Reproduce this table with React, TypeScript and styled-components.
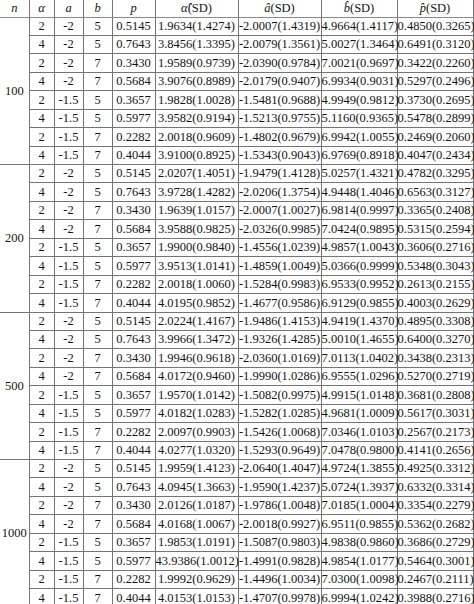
import styled, { createGlobalStyle } from 'styled-components'

const GlobalStyle = createGlobalStyle`
  html, body {
    margin: 0;
    padding: 0;
    background: #ffffff;
  }
  body {
    width: 474px;
    height: 604px;
    overflow: hidden;
  }
`

const Table = styled.table`
  border-collapse: collapse;
  table-layout: fixed;
  width: 473px;
  font-family: 'Liberation Serif', 'Times New Roman', serif;
  font-size: 12.5px;
  color: #141414;
  line-height: 1;
`

const HeadRow = styled.tr`
  height: 17px;
`

const BodyRow = styled.tr`
  height: 18.45px;
`

const HeadCell = styled.th<{ $first?: boolean }>`
  font-weight: normal;
  padding: 0;
  text-align: center;
  white-space: nowrap;
  border-left: ${({ $first }) => ($first ? 'none' : '1px solid #747474')};
  border-right: 1px solid #747474;
  border-bottom: 1px solid #8a8a8a;
`

const Symbol = styled.i`
  font-style: italic;
`

const Cell = styled.td`
  padding: 0;
  text-align: center;
  white-space: nowrap;
  border: 1px solid #747474;
`

const GroupCell = styled.td`
  padding: 0;
  text-align: center;
  vertical-align: middle;
  border-top: 1px solid #747474;
  border-bottom: 1px solid #747474;
  border-right: 1px solid #747474;
  border-left: none;
`

const widths = [29, 25, 29, 29, 43, 83, 83, 76, 76]

const params: [string, string, string, string][] = [
  ['2', '-2', '5', '0.5145'],
  ['4', '-2', '5', '0.7643'],
  ['2', '-2', '7', '0.3430'],
  ['4', '-2', '7', '0.5684'],
  ['2', '-1.5', '5', '0.3657'],
  ['4', '-1.5', '5', '0.5977'],
  ['2', '-1.5', '7', '0.2282'],
  ['4', '-1.5', '7', '0.4044'],
]

const groups: { n: string; rows: string[][] }[] = [
  {
    n: '100',
    rows: [
      ['1.9634(1.4274)', '-2.0007(1.4319)', '4.9664(1.4117)', '0.4850(0.3265)'],
      ['3.8456(1.3395)', '-2.0079(1.3561)', '5.0027(1.3464)', '0.6491(0.3120)'],
      ['1.9589(0.9739)', '-2.0390(0.9784)', '7.0021(0.9697)', '0.3422(0.2260)'],
      ['3.9076(0.8989)', '-2.0179(0.9407)', '6.9934(0.9031)', '0.5297(0.2496)'],
      ['1.9828(1.0028)', '-1.5481(0.9688)', '4.9949(0.9812)', '0.3730(0.2695)'],
      ['3.9582(0.9194)', '-1.5213(0.9755)', '5.1160(0.9365)', '0.5478(0.2899)'],
      ['2.0018(0.9609)', '-1.4802(0.9679)', '6.9942(1.0055)', '0.2469(0.2060)'],
      ['3.9100(0.8925)', '-1.5343(0.9043)', '6.9769(0.8918)', '0.4047(0.2434)'],
    ],
  },
  {
    n: '200',
    rows: [
      ['2.0207(1.4051)', '-1.9479(1.4128)', '5.0257(1.4321)', '0.4782(0.3295)'],
      ['3.9728(1.4282)', '-2.0206(1.3754)', '4.9448(1.4046)', '0.6563(0.3127)'],
      ['1.9639(1.0157)', '-2.0007(1.0027)', '6.9814(0.9997)', '0.3365(0.2408)'],
      ['3.9588(0.9825)', '-2.0326(0.9985)', '7.0424(0.9895)', '0.5315(0.2594)'],
      ['1.9900(0.9840)', '-1.4556(1.0239)', '4.9857(1.0043)', '0.3606(0.2716)'],
      ['3.9513(1.0141)', '-1.4859(1.0049)', '5.0366(0.9999)', '0.5348(0.3043)'],
      ['2.0018(1.0060)', '-1.5284(0.9983)', '6.9533(0.9952)', '0.2613(0.2155)'],
      ['4.0195(0.9852)', '-1.4677(0.9586)', '6.9129(0.9855)', '0.4003(0.2629)'],
    ],
  },
  {
    n: '500',
    rows: [
      ['2.0224(1.4167)', '-1.9486(1.4153)', '4.9419(1.4370)', '0.4895(0.3308)'],
      ['3.9966(1.3472)', '-1.9326(1.4285)', '5.0010(1.4655)', '0.6400(0.3270)'],
      ['1.9946(0.9618)', '-2.0360(1.0169)', '7.0113(1.0402)', '0.3438(0.2313)'],
      ['4.0172(0.9460)', '-1.9990(1.0286)', '6.9555(1.0296)', '0.5270(0.2719)'],
      ['1.9570(1.0142)', '-1.5082(0.9975)', '4.9915(1.0148)', '0.3681(0.2808)'],
      ['4.0182(1.0283)', '-1.5282(1.0285)', '4.9681(1.0009)', '0.5617(0.3031)'],
      ['2.0097(0.9903)', '-1.5426(1.0068)', '7.0346(1.0103)', '0.2567(0.2173)'],
      ['4.0277(1.0320)', '-1.5293(0.9649)', '7.0478(0.9800)', '0.4141(0.2656)'],
    ],
  },
  {
    n: '1000',
    rows: [
      ['1.9959(1.4123)', '-2.0640(1.4047)', '4.9724(1.3855)', '0.4925(0.3312)'],
      ['4.0945(1.3663)', '-1.9590(1.4237)', '5.0724(1.3937)', '0.6332(0.3314)'],
      ['2.0126(1.0187)', '-1.9786(1.0048)', '7.0185(1.0004)', '0.3354(0.2279)'],
      ['4.0168(1.0067)', '-2.0018(0.9927)', '6.9511(0.9855)', '0.5362(0.2682)'],
      ['1.9853(1.0191)', '-1.5087(0.9803)', '4.9838(0.9860)', '0.3686(0.2729)'],
      ['43.9386(1.0012)', '-1.4991(0.9828)', '4.9854(1.0177)', '0.5464(0.3001)'],
      ['1.9992(0.9629)', '-1.4496(1.0034)', '7.0300(1.0098)', '0.2467(0.2111)'],
      ['4.0153(1.0153)', '-1.4707(0.9978)', '6.9994(1.0242)', '0.3988(0.2716)'],
    ],
  },
]

export default function App() {
  return (
    <>
      <GlobalStyle />
      <Table>
        <colgroup>
          {widths.map((w, i) => (
            <col key={i} style={{ width: w }} />
          ))}
        </colgroup>
        <thead>
          <HeadRow>
            <HeadCell $first>
              <Symbol>n</Symbol>
            </HeadCell>
            <HeadCell>
              <Symbol>α</Symbol>
            </HeadCell>
            <HeadCell>
              <Symbol>a</Symbol>
            </HeadCell>
            <HeadCell>
              <Symbol>b</Symbol>
            </HeadCell>
            <HeadCell>
              <Symbol>p</Symbol>
            </HeadCell>
            <HeadCell>
              <Symbol>α̂</Symbol>(SD)
            </HeadCell>
            <HeadCell>
              <Symbol>â</Symbol>(SD)
            </HeadCell>
            <HeadCell>
              <Symbol>b̂</Symbol>(SD)
            </HeadCell>
            <HeadCell>
              <Symbol>p̂</Symbol>(SD)
            </HeadCell>
          </HeadRow>
        </thead>
        <tbody>
          {groups.map((g) =>
            g.rows.map((r, i) => (
              <BodyRow key={g.n + i}>
                {i === 0 && <GroupCell rowSpan={8}>{g.n}</GroupCell>}
                {params[i].map((v, j) => (
                  <Cell key={j}>{v}</Cell>
                ))}
                {r.map((v, j) => (
                  <Cell key={'e' + j}>{v}</Cell>
                ))}
              </BodyRow>
            )),
          )}
        </tbody>
      </Table>
    </>
  )
}
